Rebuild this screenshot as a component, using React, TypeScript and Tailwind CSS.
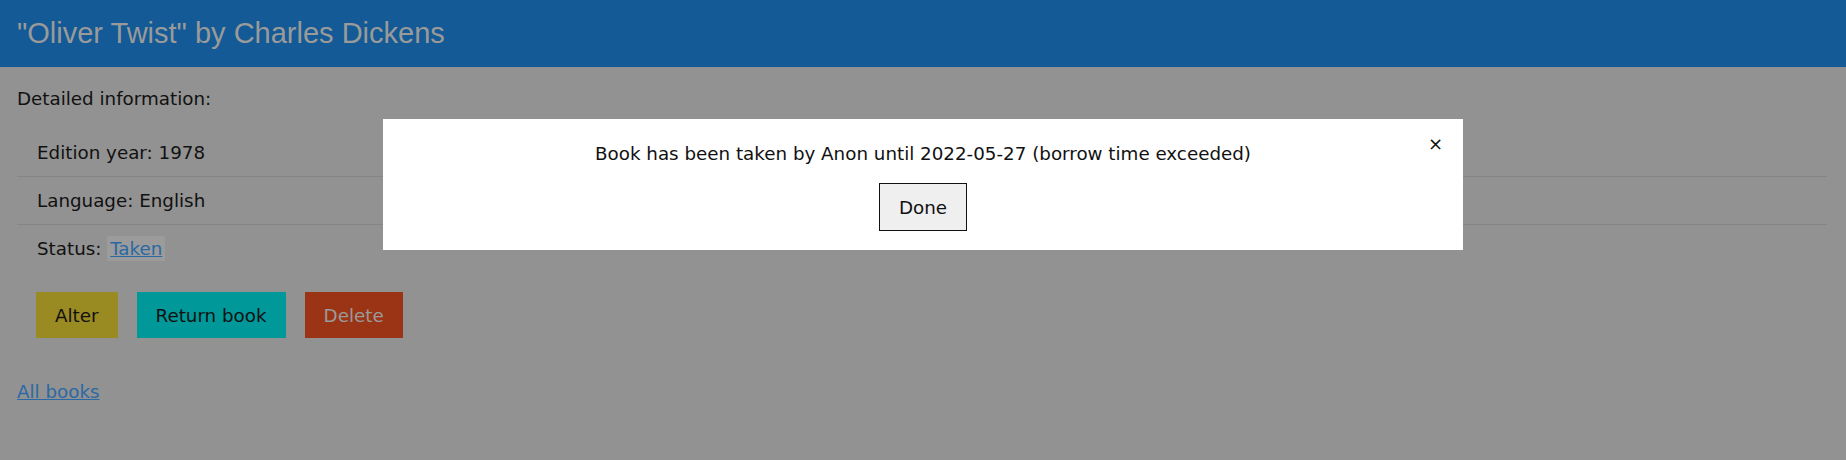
import React from "react";

const details = [
    { label: "Edition year", value: "1978" },
    { label: "Language", value: "English" },
];

const App: React.FC = () => {
    return (
        <div className="relative min-h-screen bg-[#929292] text-[18.3px] text-[#111]" style={{ fontFamily: '"DejaVu Sans", Verdana, sans-serif' }}>
            {/* Header */}
            <header className="h-[67px] bg-[#135a96] pl-[17px] flex items-center">
                <h1 className="text-[29px] leading-none text-[#9a9a9a] font-['Liberation_Sans',Arial,sans-serif]">
                    "Oliver Twist" by Charles Dickens
                </h1>
            </header>

            <main className="px-[17px] pt-[18px]">
                <p className="leading-[27px]">Detailed information:</p>

                <ul className="mt-[17px] mr-[2px]">
                    {details.map((d) => (
                        <li key={d.label} className="py-[10px] pl-5 leading-[27px] border-b border-[#858585]">
                            {d.label}: {d.value}
                        </li>
                    ))}
                    <li className="py-[10px] pl-5 leading-[27px]">
                        Status:{" "}
                        <a href="#" className="bg-[#9b9b9b] px-[3px] py-[2px] text-[#2a69a4] underline">Taken</a>
                    </li>
                </ul>

                <div className="mt-5 pl-[19px] flex gap-[19px]">
                    <button className="h-[46px] px-[19px] bg-[#9a8a22] text-[#111] leading-[27px]">Alter</button>
                    <button className="h-[46px] px-[19px] bg-[#009898] text-[#111] leading-[27px]">Return book</button>
                    <button className="h-[46px] px-[19px] bg-[#9a3415] text-[#9a9a9a] leading-[27px]">Delete</button>
                </div>

                <a href="#" className="inline-block mt-10 leading-[27px] text-[#2a69a4] underline">All books</a>
            </main>

            {/* Modal */}
            <div className="absolute left-0 right-0 top-[119px] flex justify-center">
                <div className="relative w-[1080px] bg-white pt-[21px] pb-[19px] flex flex-col items-center">
                    <button className="absolute top-[11px] right-[20px] text-[18px] leading-[27px] text-[#111]">×</button>
                    <p className="leading-[27px] text-[#111]">
                        Book has been taken by Anon until 2022-05-27 (borrow time exceeded)
                    </p>
                    <button className="mt-4 h-[48px] w-[88px] bg-[#efefef] border border-[#111] text-[#111] leading-[27px]">
                        Done
                    </button>
                </div>
            </div>
        </div>
    );
};

export default App;
